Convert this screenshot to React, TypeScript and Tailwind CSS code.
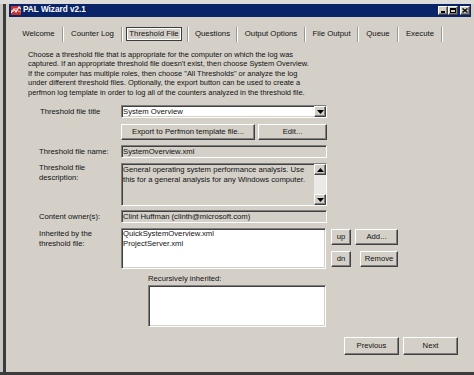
import React from "react";

const F = "font-['Liberation_Sans',Arial,sans-serif]";

const sunken =
  "border border-t-[#808080] border-l-[#808080] border-b-white border-r-white shadow-[inset_1px_1px_0_#404040,inset_-1px_-1px_0_#d4d0c8]";
const raised =
  "border border-t-white border-l-white border-b-[#404040] border-r-[#404040] shadow-[inset_-1px_-1px_0_#808080] bg-[#d4d0c8] flex items-center justify-center";

function Sep() {
  return (
    <div className="flex h-[15px] w-[2px] self-center">
      <div className="w-[1px] h-full bg-[#9a9894]" />
      <div className="w-[1px] h-full bg-white" />
    </div>
  );
}

const tabs: { label: string; w: string; active?: boolean }[] = [
  { label: "Welcome", w: "w-[47px]" },
  { label: "Counter Log", w: "w-[57px]" },
  { label: "Threshold File", w: "w-[64px]", active: true },
  { label: "Questions", w: "w-[47px]" },
  { label: "Output Options", w: "w-[66px]" },
  { label: "File Output", w: "w-[51px]" },
  { label: "Queue", w: "w-[38px]" },
  { label: "Execute", w: "w-[42px]" },
];

function Arrow({ up }: { up?: boolean }) {
  return (
    <svg width="7" height="4" viewBox="0 0 7 4">
      {up ? (
        <polygon points="3.5,0 7,4 0,4" fill="#000" />
      ) : (
        <polygon points="0,0 7,0 3.5,4" fill="#000" />
      )}
    </svg>
  );
}

export default function App() {
  return (
    <div
      className={`w-[474px] h-[375px] bg-[#d4d0c8] flex flex-col overflow-hidden text-[#111] text-[7.7px] ${F}`}
    >
      <div className="h-[4px] bg-[#dedcd8] shrink-0" />
      <div className="flex flex-1 min-h-0">
        <div className="w-[3px] bg-[#c8c6c2]" />
        <div className="w-[3px] bg-[#3c3c3c]" />
        <div className="flex-1 flex flex-col">
          {/* Title bar */}
          <div className="ml-[3px] mr-[3px] h-[13px] bg-[#0a246a] flex items-center">
            <svg width="10" height="9" viewBox="0 0 10 9" className="ml-[2px]">
              <rect x="0" y="0" width="10" height="9" fill="#c8302c" />
              <polyline points="0,7 3,3 5,6 8,1 10,3" fill="none" stroke="#fff" strokeWidth="1.2" />
              <polyline points="0,4 2,6 5,2 7,5 10,6" fill="none" stroke="#f4c0c0" strokeWidth="0.8" />
            </svg>
            <span className="ml-[2px] text-white font-bold text-[8.2px] leading-none">PAL Wizard v2.1</span>
            <div className="ml-auto flex items-center mr-[1px]">
              <div className={`${raised} w-[10px] h-[9px] items-end pb-[1px]`}>
                <div className="w-[4px] h-[2px] bg-black" />
              </div>
              <div className={`${raised} w-[10px] h-[9px]`}>
                <div className="w-[6px] h-[5px] border border-black border-t-2" />
              </div>
              <div className={`${raised} w-[10px] h-[9px] ml-[2px]`}>
                <svg width="6" height="5" viewBox="0 0 6 5">
                  <path d="M0.5 0.5 L5.5 4.5 M5.5 0.5 L0.5 4.5" stroke="#000" strokeWidth="1.4" />
                </svg>
              </div>
            </div>
          </div>

          {/* Tabs */}
          <div className="mt-[9px] h-[16px] flex ml-[9px] text-[7.8px]">
            {tabs.map((t) => (
              <React.Fragment key={t.label}>
                <div className={`${t.w} h-full flex items-center justify-center`}>
                  {t.active ? (
                    <div className="ml-[-2px] w-[56px] h-[14px] border border-[#3c3c3c] shadow-[inset_1px_1px_0_#ffffff,inset_-1px_-1px_0_#ffffff] flex items-center justify-center">
                      Threshold File
                    </div>
                  ) : (
                    t.label
                  )}
                </div>
                <Sep />
              </React.Fragment>
            ))}
          </div>

          {/* Paragraph */}
          <div className="mt-[8px] ml-[22px] leading-[9.4px] whitespace-nowrap text-[7.45px]">
            <div>Choose a threshold file that is appropriate for the computer on which the log was</div>
            <div>captured. If an appropriate threshold file doesn't exist, then choose System Overview.</div>
            <div>If the computer has multiple roles, then choose "All Thresholds" or analyze the log</div>
            <div>under different threshold files. Optionally, the export button can be used to create a</div>
            <div>perfmon log template in order to log all of the counters analyzed in the threshold file.</div>
          </div>

          {/* Form */}
          <div className="ml-[33px] flex flex-col">
            {/* Threshold file title */}
            <div className="mt-[8px] flex items-center h-[13px]">
              <div className="w-[82px] pl-[1px]">Threshold file title</div>
              <div className={`${sunken} w-[206px] h-[13px] bg-white flex items-center pl-[1px]`}>
                <span className="flex-1">System Overview</span>
                <div className={`${raised} w-[12px] h-[11px]`}>
                  <Arrow />
                </div>
              </div>
            </div>

            {/* Buttons */}
            <div className="mt-[6px] flex h-[16px]">
              <div className="w-[82px]" />
              <div className={`${raised} w-[134px] h-[16px]`}>Export to Perfmon template file...</div>
              <div className={`${raised} w-[69px] h-[16px] ml-[3px]`}>Edit...</div>
            </div>

            {/* Threshold file name */}
            <div className="mt-[5px] flex items-center h-[13px]">
              <div className="w-[82px]">Threshold file name:</div>
              <div className={`${sunken} w-[206px] h-[13px] flex items-center pl-[1px]`}>
                SystemOverview.xml
              </div>
            </div>

            {/* Description */}
            <div className="mt-[5px] flex h-[43px]">
              <div className="w-[82px] leading-[10px] pt-[0px]">
                Threshold file
                <br />
                description:
              </div>
              <div className={`${sunken} w-[206px] h-[43px] flex`}>
                <div className="flex-1 pl-[1px] pt-[1px] leading-[10px] whitespace-nowrap">
                  <div>General operating system performance analysis. Use</div>
                  <div>this for a general analysis for any Windows computer.</div>
                </div>
                <div className="w-[12px] h-full flex flex-col bg-[#ebe9e5]">
                  <div className={`${raised} w-[12px] h-[11px]`}>
                    <Arrow up />
                  </div>
                  <div className="flex-1" />
                  <div className={`${raised} w-[12px] h-[11px]`}>
                    <Arrow />
                  </div>
                </div>
              </div>
            </div>

            {/* Content owner */}
            <div className="mt-[4px] flex items-center h-[13px]">
              <div className="w-[82px]">Content owner(s):</div>
              <div className={`${sunken} w-[206px] h-[13px] flex items-center pl-[1px]`}>
                Clint Huffman (clinth@microsoft.com)
              </div>
            </div>

            {/* Inherited */}
            <div className="mt-[5px] flex h-[41px]">
              <div className="w-[82px] leading-[9.5px] pt-[1px]">
                Inherited by the
                <br />
                threshold file:
              </div>
              <div className={`${sunken} w-[205px] h-[41px] bg-white pl-[1px] leading-[9.5px]`}>
                <div>QuickSystemOverview.xml</div>
                <div>ProjectServer.xml</div>
              </div>
              <div className="ml-[5px] mt-[1px] flex flex-col gap-[6px]">
                <div className={`${raised} w-[20px] h-[16px]`}>up</div>
                <div className={`${raised} w-[20px] h-[16px]`}>dn</div>
              </div>
              <div className="ml-[4px] mt-[1px] w-[43px] flex flex-col items-end gap-[6px]">
                <div className={`${raised} w-[43px] h-[16px]`}>Add...</div>
                <div className={`${raised} w-[38px] h-[16px]`}>Remove</div>
              </div>
            </div>

            {/* Recursively inherited */}
            <div className="ml-[109px] mt-[5px] leading-[10px]">Recursively inherited:</div>
            <div className={`${sunken} ml-[109px] mt-[1px] w-[178px] h-[42px] bg-white`} />

            {/* Prev / Next */}
            <div className="mt-[10px] ml-[305px] flex">
              <div className={`${raised} w-[55px] h-[18px]`}>Previous</div>
              <div className={`${raised} w-[55px] h-[18px] ml-[4px]`}>Next</div>
            </div>
          </div>
        </div>
      </div>
      <div className="h-[3px] bg-[#3c3c3c] shrink-0" />
    </div>
  );
}
